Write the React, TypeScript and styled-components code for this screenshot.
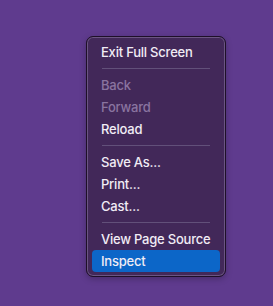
import React from "react";
import styled, { createGlobalStyle } from "styled-components";

type Entry = { label: string; disabled?: boolean; active?: boolean } | "sep";

const entries: Entry[] = [
  { label: "Exit Full Screen" },
  "sep",
  { label: "Back", disabled: true },
  { label: "Forward", disabled: true },
  { label: "Reload" },
  "sep",
  { label: "Save As..." },
  { label: "Print..." },
  { label: "Cast..." },
  "sep",
  { label: "View Page Source" },
  { label: "Inspect", active: true },
];

function App() {
  return (
    <>
      <GlobalStyle />
      <Page>
        <Menu>
          {entries.map((e, i) =>
            e === "sep" ? (
              <Separator key={i} />
            ) : (
              <Item key={i} $disabled={e.disabled} $active={e.active}>
                {e.label}
              </Item>
            )
          )}
        </Menu>
      </Page>
    </>
  );
}

export default App;

const GlobalStyle = createGlobalStyle`
  html, body {
    margin: 0;
    padding: 0;
    background: #5f3b8e;
  }
`;

const Page = styled.div`
  width: 273px;
  height: 306px;
  padding: 36px 0 0 86px;
  box-sizing: border-box;
  font-family: "Inter", "Liberation Sans", sans-serif;
`;

const Menu = styled.div`
  width: 140px;
  box-sizing: border-box;
  padding: 4px 5px;
  background: #422859;
  border: 1px solid #1e1028;
  box-shadow: inset 0 0 0 1px #6b5582, 0 2px 6px rgba(0, 0, 0, 0.25);
  border-radius: 7px;
  display: flex;
  flex-direction: column;
`;

const Item = styled.div<{ $disabled?: boolean; $active?: boolean }>`
  height: 22px;
  line-height: 22px;
  padding: 0 9px;
  font-size: 13px;
  font-weight: 500;
  letter-spacing: -0.22px;
  border-radius: 4px;
  color: ${({ $disabled }) => ($disabled ? "#8a74a0" : "#f1ecf5")};
  background: ${({ $active }) => ($active ? "#0c66c8" : "transparent")};
  white-space: nowrap;
`;

const Separator = styled.div`
  height: 1px;
  margin: 5px 10px;
  background: #62507a;
`;
